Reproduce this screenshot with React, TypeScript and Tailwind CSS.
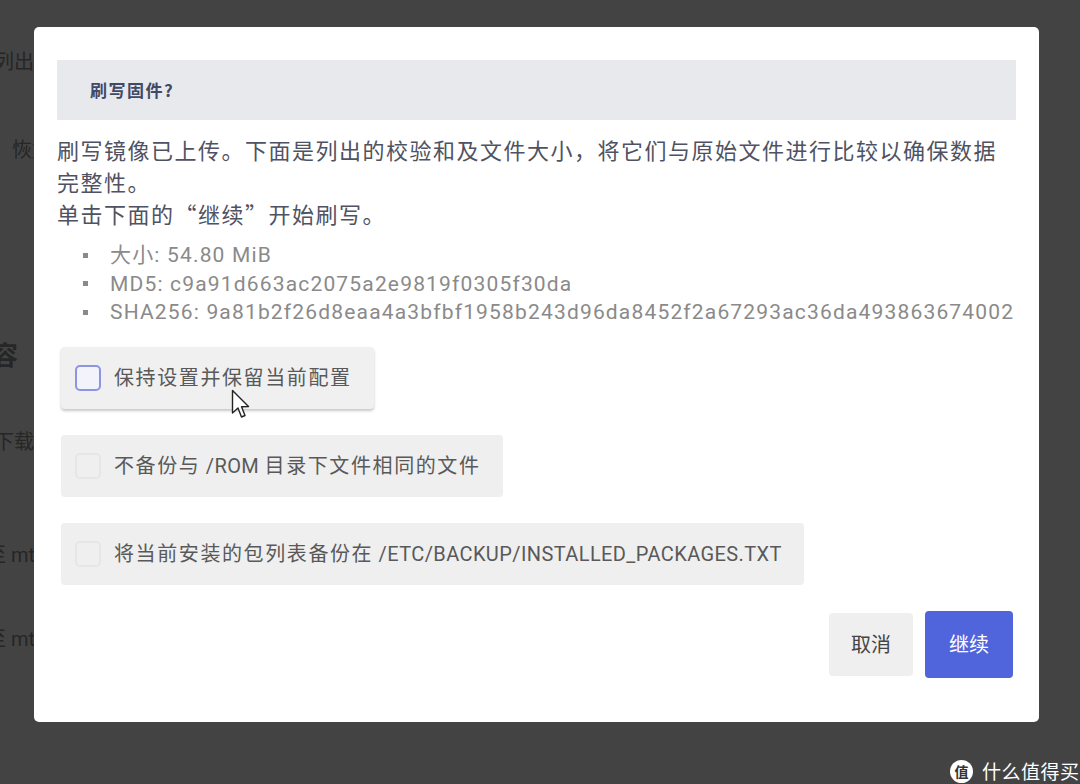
import React from "react";

const cjk = '"Noto Sans CJK SC", sans-serif';
const latin = 'Roboto, "Noto Sans CJK SC", sans-serif';

type Part = { t: string; latin?: boolean };

function Option({ parts, active }: { parts: Part[]; active?: boolean }) {
  return (
    <div
      className={`flex items-center self-start h-[62px] pl-[14px] pr-[22px] ml-[4px] rounded-[4px] ${
        active ? "shadow-[0_2px_3px_rgba(0,0,0,0.22)] bg-[#f0f0f1]" : "bg-[#efefef]"
      }`}
    >
      <span
        className={`w-[26px] h-[26px] rounded-[5px] border-2 shrink-0 ${
          active ? "border-[#8d95e2] bg-[#f3f3fb]" : "border-[#e6e6e6] bg-[#efefef]"
        }`}
      />
      <span className="ml-[13px] text-[20px] text-[#595959] whitespace-pre" style={{ fontFamily: latin }}>
        {parts.map((p, i) => (
          <span key={i} className={p.latin ? "tracking-[0.4px]" : "tracking-[1.6px]"}>
            {p.t}
          </span>
        ))}
      </span>
    </div>
  );
}

function Cursor() {
  return (
    <svg className="absolute left-[231px] top-[389px]" width="20" height="32" viewBox="0 0 20 32">
      <path
        d="M1.5 1.5 L1.5 24 L7 19 L10.5 28 L14 26.5 L10.5 17.8 L17.5 17.5 Z"
        fill="#fff"
        stroke="#222"
        strokeWidth="1.4"
        strokeLinejoin="round"
      />
    </svg>
  );
}

const checks = [
  "大小: 54.80 MiB",
  "MD5: c9a91d663ac2075a2e9819f0305f30da",
  "SHA256: 9a81b2f26d8eaa4a3bfbf1958b243d96da8452f2a67293ac36da493863674002",
];

export default function App() {
  return (
    <div className="relative w-[1080px] h-[784px] overflow-hidden bg-[#434343]" style={{ fontFamily: cjk }}>
      {/* page behind the overlay */}
      <div className="flex flex-col text-[#262626] text-[20px]">
        <span className="mt-[46px] ml-[-6px]">列出</span>
        <span className="mt-[58px] ml-[12px]">恢复</span>
        <span className="mt-[170px] ml-[-34px] text-[26px] font-bold">内容</span>
        <span className="mt-[53px] ml-[-6px]">下载</span>
        <span className="mt-[84px] ml-[-14px]" style={{ fontFamily: latin }}>
          至 mtd
        </span>
        <span className="mt-[54px] ml-[-14px]" style={{ fontFamily: latin }}>
          至 mtd
        </span>
      </div>

      <div className="absolute left-[34px] top-[27px] w-[1005px] h-[695px] bg-white rounded-[5px] px-[23px] pt-[33px] flex flex-col">
        <div className="h-[60px] bg-[#e8e9ec] flex items-center pl-[33px]">
          <span className="text-[17px] font-bold text-[#3e4a68] tracking-[1.5px]">刷写固件?</span>
        </div>

        <div className="mt-[13px] text-[22px] leading-[32px] text-[#4f5263] tracking-[1.5px]">
          <p>刷写镜像已上传。下面是列出的校验和及文件大小，将它们与原始文件进行比较以确保数据完整性。</p>
          <p>单击下面的“继续”开始刷写。</p>
        </div>

        <ul
          className="mt-[12px] pl-[26px] text-[21px] leading-[28.5px] text-[#8a8a8a] tracking-[1.17px] whitespace-nowrap"
          style={{ fontFamily: latin }}
        >
          {checks.map((t) => (
            <li key={t} className="flex items-center">
              <span className="w-[5px] h-[5px] bg-[#8a8a8a] mr-[22px] shrink-0" />
              <span>{t}</span>
            </li>
          ))}
        </ul>

        <div className="mt-[20px] flex flex-col gap-[26px]">
          <Option active parts={[{ t: "保持设置并保留当前配置" }]} />
          <Option parts={[{ t: "不备份与" }, { t: " /ROM ", latin: true }, { t: "目录下文件相同的文件" }]} />
          <Option
            parts={[{ t: "将当前安装的包列表备份在" }, { t: " /ETC/BACKUP/INSTALLED_PACKAGES.TXT", latin: true }]}
          />
        </div>

        <div className="mt-[26px] flex justify-end items-center gap-[12px] pr-[3px]">
          <button className="w-[84px] h-[63px] rounded-[4px] bg-[#efefef] text-[20px] text-[#444]">取消</button>
          <button className="w-[88px] h-[67px] rounded-[4px] bg-[#5064dc] text-[20px] text-white">继续</button>
        </div>
      </div>

      <Cursor />

      <div className="absolute left-[950px] top-[757px] flex items-center gap-[9px]">
        <span className="w-[23px] h-[23px] rounded-full bg-white text-[#333] text-[14px] font-bold flex items-center justify-center">
          值
        </span>
        <span className="text-[19px] text-white tracking-[0.5px]">什么值得买</span>
      </div>
    </div>
  );
}
